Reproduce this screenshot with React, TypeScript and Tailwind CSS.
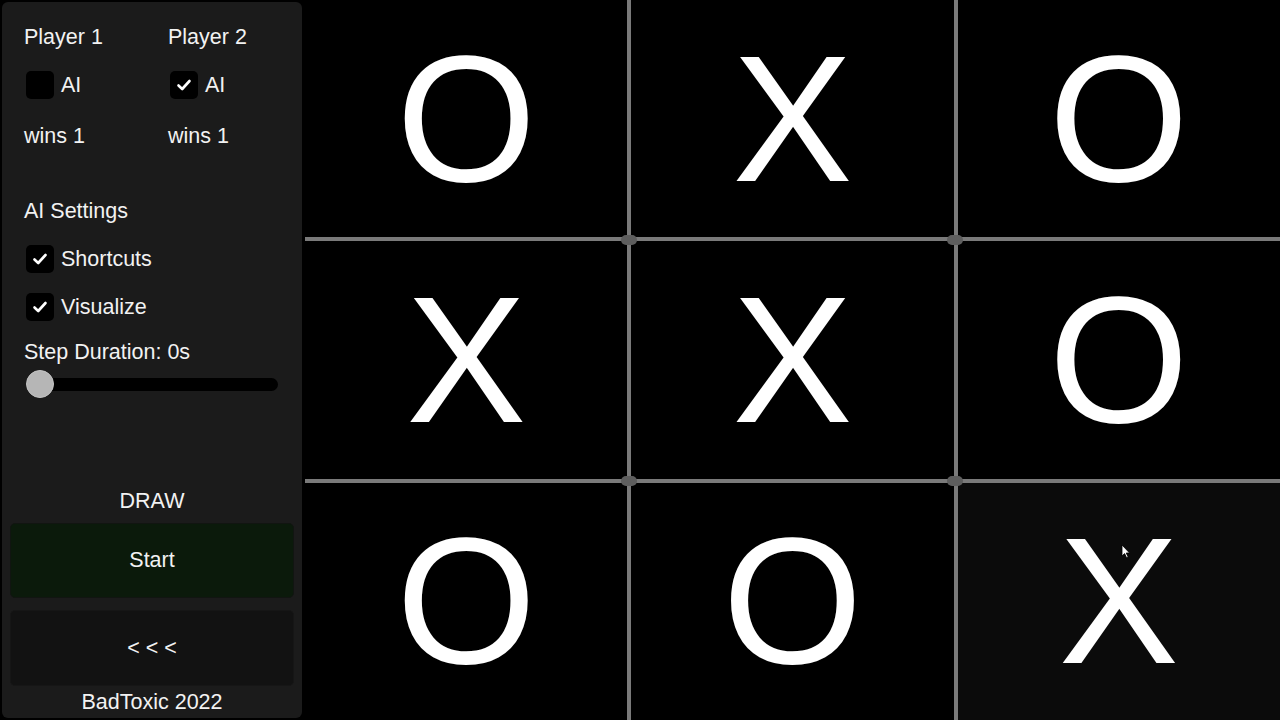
import { useState } from "react";

type Mark = "X" | "O";

const board: Mark[] = ["O", "X", "O", "X", "X", "O", "O", "O", "X"];

const Check = () => (
  <svg viewBox="0 0 16 16" className="w-[16px] h-[16px]">
    <polyline
      points="2.5,8.5 6.2,12 13.5,4"
      fill="none"
      stroke="white"
      strokeWidth="2.6"
      strokeLinecap="round"
      strokeLinejoin="round"
    />
  </svg>
);

const Checkbox = ({ checked, label }: { checked: boolean; label: string }) => (
  <div className="flex items-center h-[28px] ml-[2px]">
    <div className="w-[28px] h-[28px] rounded-[5px] bg-black flex items-center justify-center">
      {checked && <Check />}
    </div>
    <span className="ml-[7px]">{label}</span>
  </div>
);

const Cursor = () => (
  <svg viewBox="0 0 10 15" className="absolute w-[10px] h-[15px] left-[163px] top-[61px]">
    <path d="M1 1 L1 12 L3.6 9.6 L5.6 13.8 L7.2 13 L5.2 9 L8.6 9 Z" fill="white" stroke="black" strokeWidth="0.8" />
  </svg>
);

export default function App() {
  const [hover] = useState(8);

  return (
    <div className="flex w-[1280px] h-[720px] bg-black text-[#f2f2f2] font-['Liberation_Sans',Arial,sans-serif] overflow-hidden">
      {/* side panel */}
      <div className="w-[300px] mt-[2px] mb-[2px] ml-[2px] rounded-[6px] bg-[#1b1b1b] flex flex-col text-[21.5px]">
        <div className="flex flex-col px-[22px] pt-[21px]">
          <div className="grid grid-cols-[144px_1fr]">
            {[false, true].map((ai, i) => (
              <div key={i} className="flex flex-col">
                <div className="h-[28px] leading-[28px]">Player {i + 1}</div>
                <div className="mt-[20px]">
                  <Checkbox checked={ai} label="AI" />
                </div>
                <div className="mt-[23px] h-[28px] leading-[28px]">wins 1</div>
              </div>
            ))}
          </div>

          <div className="mt-[47px] h-[28px] leading-[28px]">AI Settings</div>
          <div className="mt-[20px]">
            <Checkbox checked label="Shortcuts" />
          </div>
          <div className="mt-[20px]">
            <Checkbox checked label="Visualize" />
          </div>
          <div className="mt-[17px] h-[28px] leading-[28px]">Step Duration: 0s</div>

          {/* slider */}
          <div className="relative mt-[4px] h-[28px] ml-[2px] w-[252px] flex items-center">
            <div className="w-full h-[13px] rounded-full bg-black" />
            <div className="absolute left-0 top-0 w-[28px] h-[28px] rounded-full bg-[#b6b6b6] border border-[#c4c4c4]" />
          </div>
        </div>

        <div className="mt-auto flex flex-col px-[8px] pb-[2px]">
          <div className="h-[28px] leading-[28px] text-center">DRAW</div>
          <button className="mt-[8px] h-[75px] rounded-[5px] bg-[#0b1a0b] border border-[#111511] text-center">
            Start
          </button>
          <button className="mt-[12px] h-[76px] rounded-[5px] bg-[#121212] border border-[#161616] text-center">
            &lt; &lt; &lt;
          </button>
          <div className="mt-[2px] h-[28px] leading-[28px] text-center">BadToxic 2022</div>
        </div>
      </div>

      {/* board */}
      <div className="relative flex-1 ml-[3px] grid grid-cols-3 grid-rows-3 gap-[4px] bg-[#7a7a7a]">
        {board.map((m, i) => (
          <div
            key={i}
            className={`relative flex items-center justify-center ${i === hover ? "bg-[#0b0b0b]" : "bg-black"}`}
          >
            <span className="text-[180px] leading-none text-white">{m}</span>
            {i === hover && <Cursor />}
          </div>
        ))}
        {/* joints where the lines cross */}
        <div className="absolute left-[316px] top-[235px] w-[16px] h-[10px] rounded-full bg-[#5e5e5e]" />
        <div className="absolute left-[642px] top-[235px] w-[16px] h-[10px] rounded-full bg-[#5e5e5e]" />
        <div className="absolute left-[316px] top-[476px] w-[16px] h-[10px] rounded-full bg-[#5e5e5e]" />
        <div className="absolute left-[642px] top-[476px] w-[16px] h-[10px] rounded-full bg-[#5e5e5e]" />
      </div>
    </div>
  );
}
